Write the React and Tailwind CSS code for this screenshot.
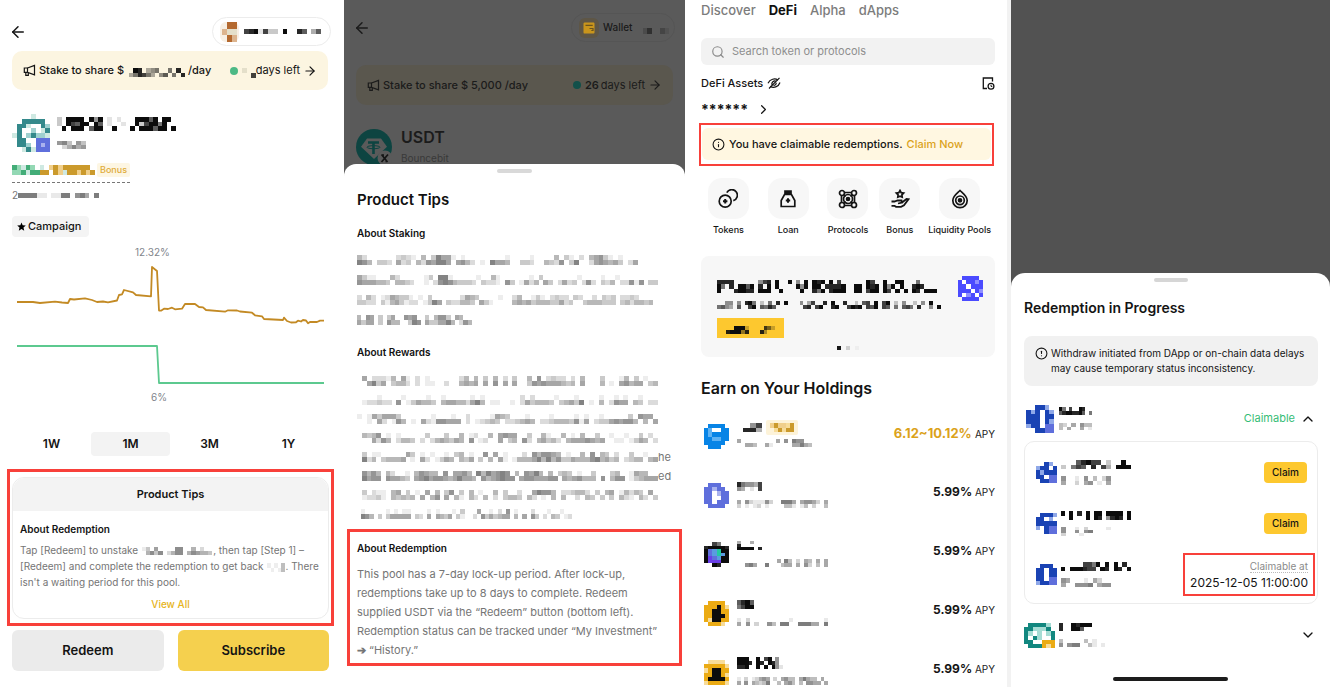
import React, { useState } from 'react';
import {
  LuArrowLeft,
  LuArrowRight,
  LuChevronDown,
  LuChevronRight,
  LuChevronUp,
  LuInfo,
  LuCircleAlert,
  LuSearch,
} from 'react-icons/lu';

// Colours a mosaic cell can take, digits are shades of black
const cellColors = {
  T: '#34898b',
  m: '#9fd0cf',
  l: '#cfe9e2',
  B: '#5f6fdc',
  p: '#a9b2ee',
  G: '#43ad78',
  g: '#93d8b4',
  O: '#cb9a2c',
  o: '#f0cf8c',
  R: '#b4692f',
  r: '#dcb48e',
  b: '#e4dfca',
  w: '#ffffff',
  V: '#4b4bff',
  v: '#8f8fff',
  S: '#0784e6',
  s: '#5fb2f3',
  N: '#1a43b4',
  n: '#8fa8e8',
  Y: '#ebab14',
  y: '#f7dc9a',
  C: '#12877f',
  c: '#a5dcd4',
  E: '#22c9a2',
  e: '#5a9be0',
  U: '#6a3fe8',
};

function Mosaic({ rows, className }) {
  const cols = Math.max(...rows.map((row) => row.length));
  return (
    <svg
      aria-hidden="true"
      className={className}
      viewBox={`0 0 ${cols} ${rows.length}`}
      preserveAspectRatio="none"
      shapeRendering="crispEdges"
    >
      {rows.map((row, y) =>
        row.split('').map((cell, x) => {
          if (cell === ' ') return null;
          const shade = Number(cell);
          return (
            <rect
              key={`${x}-${y}`}
              x={x}
              y={y}
              width="1"
              height="1"
              fill={shade ? '#0c0c0c' : cellColors[cell]}
              fillOpacity={shade ? shade / 9 : 1}
            />
          );
        })
      )}
    </svg>
  );
}

function Megaphone() {
  return (
    <svg
      viewBox="0 0 13 13"
      className="h-[13px] w-[13px] shrink-0"
      fill="none"
      stroke="currentColor"
      strokeWidth="1.2"
    >
      <path d="M4.5 4 11.5 1.4v9.4L4.5 8.400Z" />
      <path d="M4.500 4H1.300v4.400h3.200M2.800 8.400v3h2.500V9" />
    </svg>
  );
}

function RedBox({ className, children }) {
  return <div className={`border-[#f8403a] ${className}`}>{children}</div>;
}

const stakingLines = [
  [
    '42      2321 4 37551 1        1    1    4 31 2 45631 1  ',
    '764 332 523 4265775 5642 1 7554  332  4326 37  2565453 25',
  ],
  [
    '5311   42     13 771     1  41      1 3       1    1  1     ',
    '6555443 4432  1 267643332 3221 63 1524 53 2523 262 324 22616 33',
  ],
  [
    '2 42 1254331 1 3      2543    1  24  131 2322 32  2 323 2232 ',
    '3322 31453122 1375 322443 531    4545344433523  3444333 3424434 ',
  ],
  ['4 65 3 35  656  3 4663 54 ', '5355 3 644  376 5335574 264'],
];

const rewardLines = [
  [
    ' 5 22214 51 2 1      24 4 3 4 2 3  4 6 2322 2 4   3   14 3 1 ',
    '  5735 3442 2 11  2  4545 5 6 5 5  3656555434 5   4 1 56455 34',
  ],
  [
    '    1    1    1  1     1 1       2 2    1   1    1  1 1  1   ',
    ' 122322 6 135443 455442574 11  1 2534443 34537 1 4 2655 43 22',
  ],
  [
    '1 1535553      1   1  2    1543   1    1    1 1  1     3 655',
    '  1 52 164 1 52166555 2 12343 223454 2234443615 233565664 4 5',
  ],
  [
    ' 4346 1 1     3   3  4 12  4 5655  3  41  4 1 4  3  1  1  3 2',
    '   5264 2443 2 2454354 6 12  5 34 62 45342 45556545  11 1354 2',
  ],
  [
    ' 3 11     53 1 1  1 34 1  6 5 1   2 646654 1  4 6 43 2  3  1 ',
    ' 724 34445 1 52 1354 435 3 4 51 1444574746335444674534 2344 45',
  ],
  [
    ' 6464 42  1 46544 6 5564 7475676 4 6574 4 343 1  3   34  1544 ',
    ' 7566 65543 5675665457554 6456766 56655566 5456444 6 466 134555',
  ],
  [
    ' 3 211 45 3 1 5 4 36 3 4 1  4 3  2  57664 223442 3 45 14243 5 ',
    ' 12231 43434 5 46 5 41 42 4 2 3443 42 1 4 4  2 43 3 3 421 42 3',
  ],
  [
    ' 1     1 1 11    1 1   1 3   5  1 2 6 1   2   1  1  ',
    ' 764 3 355555 32 5 5435 31  2 6353455 4 5 63 2 43 12',
  ],
];

function StakePanel() {
  const [range, setRange] = useState('1M');

  return (
    <section className="min-w-0 bg-white pt-[17px]">
      <div className="pr-4 pl-3">
        <header className="flex h-[29px] items-center justify-between">
          <button type="button" aria-label="Back">
            <LuArrowLeft className="-ml-[3px] h-[18px] w-[18px]" />
          </button>
          <div className="-mr-[3px] flex h-[29px] w-[119px] items-center gap-[5px] rounded-full border border-[#ececec] pl-[7px]">
            <span className="rounded-md bg-[#f7efe4] px-[2px]">
              <Mosaic
                className="h-5 w-[15px]"
                rows={[' RR', 'rbb', ' Rr']}
              />
            </span>
            <Mosaic className="h-[5px] w-[77px]" rows={['7891722 9  86 36']} />
          </div>
        </header>

        <a
          href="#campaign"
          className="mt-[5px] flex h-[39px] items-center rounded-[10px] bg-[#fcf5e1] px-[11px] text-[11px] font-medium"
        >
          <Megaphone />
          <span className="ml-[3px] whitespace-nowrap">Stake to share $</span>
          <Mosaic
            className="mt-1 ml-[5px] h-[9px] w-[56px]"
            rows={[' 98 345  5 8', '358753 46 5 8']}
          />
          <span className="ml-[3px]">/day</span>
          <span className="mr-1 ml-auto h-2 w-2 rounded-full bg-[#4cb985]" />
          <Mosaic className="mt-1 h-[10px] w-[14px]" rows={['b  ', '  7']} />
          <span className="font-normal whitespace-nowrap">days left</span>
          <LuArrowRight className="ml-[3px] h-[14px] w-[14px] shrink-0" />
        </a>

        <div className="mt-6 flex h-[38px]">
          <Mosaic
            className="h-[38px] w-[38px]"
            rows={[
              '    l   ',
              '  TTTTT ',
              ' TTlwwTm',
              ' TwwmwlT',
              'lTwmTmml',
              ' TTwwBBB',
              ' TTmwBpB',
              '  lTlBBB',
            ]}
          />
          <div className="ml-[7px] pt-[3px]">
            <Mosaic
              className="h-[14px] w-[119px]"
              rows={[
                '2 9999 949 1 1   99969 99',
                '2 97699 96 1  1  9279959 ',
                ' 9 999 699  9   9 999699 9',
              ]}
            />
            <Mosaic
              className="mt-[10px] h-2 w-[29px] opacity-75"
              rows={['563 53', ' 24645']}
            />
          </div>
        </div>

        <div className="mt-[11px] flex h-5 w-[118px] items-start border-b border-dashed border-[#777]">
          <Mosaic
            className="mt-[2px] h-[10px] w-[84px]"
            rows={['GglGg l oOoOOOOOO ', 'ggGlGGOO OolOOoOoO']}
          />
          <span className="ml-[2px] rounded-xs bg-[#fdf6e3] px-[3px] text-[9px] leading-[14px] font-medium text-[#e0ac3a]">
            Bonus
          </span>
        </div>
        <div className="mt-1 flex h-4 items-center text-[10px] text-[#777]">
          2
          <Mosaic
            className="h-[5px] w-[81px] opacity-80"
            rows={['666611 1166 564 6']}
          />
        </div>

        <span className="mt-[13px] flex h-[21px] w-[77px] items-center rounded-sm bg-[#f4f4f4] px-[5px] text-[11px] font-medium">
          <svg viewBox="0 0 10 10" className="mr-[2px] h-[9px] w-[9px]">
            <path d="M5 .5 6.300 3.700 9.800 4 7.200 6.200 8 9.600 5 7.800 2 9.600 2.800 6.200.2 4l3.500-.3Z" />
          </svg>
          Campaign
        </span>

        <div className="mt-[7px] mr-1 ml-[5px] text-[10px] leading-4 text-[#81858c]">
          <p className="pl-[118px] whitespace-nowrap">12.32%</p>
          <svg
            viewBox="0 0 307 124"
            className="mt-1 w-full"
            fill="none"
            strokeLinejoin="round"
            strokeWidth="1.800"
          >
            <polyline
              stroke="#c38a24"
              points="0,38 16,38 23,39 38,37.700 45,38.500 51,39 53,35 57,35.500 68,34.300 75,36 80,38 86,37.500 91,38.300 100,36.500 102,31 105,30.300 107,26 116,28.300 119,31 134,32.300 135,3 140,7 142,46.500 144,46.700 147,44.700 151,45 155,43.700 158,45.300 165,44.700 168,40 178,40 182,43 186,43.300 189,46 208,47.700 211,46.300 220,46.500 223,47.500 235,48.700 238,51.300 245,52.300 247,55 266,56 267,53.700 270,57 274,58.500 279,58.300 281,56.700 284,57.500 286,56 289,56.500 291,59.300 293,58 300,58 303,56.700 307,56.700"
            />
            <polyline
              stroke="#5cc98f"
              points="0,82 140,82 142,119 307,119"
            />
          </svg>
          <p className="mt-px pl-[134px]">6%</p>
        </div>

        <div className="mt-[27px] grid grid-cols-4 text-[12px] font-semibold">
          {['1W', '1M', '3M', '1Y'].map((item) => (
            <button
              key={item}
              type="button"
              onClick={() => setRange(item)}
              className={
                range === item ? 'h-6 rounded-sm bg-[#f3f3f3]' : 'h-6'
              }
            >
              {item}
            </button>
          ))}
        </div>
      </div>

      <RedBox className="mt-[13px] mr-[10px] ml-[7px] border-3 px-[2px] pt-[5px] pb-1">
        <div className="rounded-xl border border-[#ececec]">
          <h2 className="rounded-t-xl bg-[#f3f3f3] text-center text-[11px] leading-[33px] font-semibold">
            Product Tips
          </h2>
          <div className="px-[7px] pt-[11px] pb-[6px]">
            <h3 className="text-[10px] leading-[14px] font-semibold">
              About Redemption
            </h3>
            <p className="mt-[6px] text-[10px] leading-4 whitespace-nowrap text-[#757575]">
              Tap [Redeem] to unstake
              <Mosaic
                className="mr-px ml-1 inline h-2 w-[70px] opacity-70"
                rows={['13 5    66  4 2 ', ' 4636 2466 465443']}
              />
              , then tap [Step 1] –
              <br />
              [Redeem] and complete the redemption to get back
              <Mosaic
                className="ml-1 inline h-[9px] w-[18px] opacity-60"
                rows={['1 1 4', ' 1 14']}
              />
              . There
              <br />
              isn't a waiting period for this pool.
            </p>
            <button
              type="button"
              className="mx-auto mt-[6px] block text-[10px] leading-4 font-medium text-[#e6b422]"
            >
              View All
            </button>
          </div>
        </div>
      </RedBox>

      <div className="mt-1 grid grid-cols-2 gap-[14px] pr-[15px] pl-3 text-[13px] font-semibold">
        <button type="button" className="h-[41px] rounded-md bg-[#ebebeb]">
          Redeem
        </button>
        <button type="button" className="h-[41px] rounded-md bg-[#f5d04e]">
          Subscribe
        </button>
      </div>
    </section>
  );
}

function TipsPanel() {
  return (
    <section className="flex min-w-0 flex-col bg-[#5a5a5a] text-[#111]">
      <div className="h-[164px] overflow-hidden px-3 pt-[13px] text-[#1b1b1b]">
        <header className="flex h-[29px] items-center justify-between">
          <button type="button" aria-label="Back">
            <LuArrowLeft className="-ml-[3px] h-[18px] w-[18px]" />
          </button>
          <div className="-mr-[2px] flex h-[29px] w-[104px] items-center rounded-full border border-[#555] pl-[7px] text-[10px] font-medium">
            <span className="flex h-5 w-5 items-center justify-center rounded-md bg-[#5e5646]">
              <svg viewBox="0 0 12 12" className="h-3 w-3">
                <path
                  fill="#c9951c"
                  d="M.5 1.500A1.200 1.200 0 0 1 1.700.4h8.600c.7 0 1.200.5 1.200 1.200v8.800c0 .7-.5 1.200-1.200 1.200H1.700A1.200 1.200 0 0 1 .5 10.400Z"
                />
                <path
                  d="M2.500 3.300h7.200M6.500 6.500h3.500v2H8.300"
                  stroke="#6b541c"
                  strokeWidth="1.200"
                  fill="none"
                />
              </svg>
            </span>
            <span className="ml-1">Wallet</span>
            <Mosaic
              className="mt-[6px] ml-[10px] h-[6px] w-[26px] opacity-80"
              rows={['26  31']}
            />
          </div>
        </header>

        <a
          href="#campaign"
          className="mt-[23px] flex h-10 items-center rounded-[10px] bg-[#5a574e] px-[11px] text-[11px] font-medium"
        >
          <Megaphone />
          <span className="ml-[3px] whitespace-nowrap">
            Stake to share $ 5,000 /day
          </span>
          <span className="mr-1 ml-auto h-2 w-2 rounded-full bg-[#12504a]" />
          <span className="font-semibold">26</span>
          <span className="ml-[2px] font-normal whitespace-nowrap">
            days left
          </span>
          <LuArrowRight className="ml-[3px] h-[14px] w-[14px] shrink-0" />
        </a>

        <div className="mt-6 flex">
          <svg viewBox="0 0 36 36" className="h-9 w-9 shrink-0">
            <circle cx="18" cy="18" r="18" fill="#0d4441" />
            <path d="M11 9.500h14l6 8.200L18 30 5 17.700Z" fill="#5a5a5a" />
            <path
              d="M12 13.500h11M17.500 13.500V25"
              stroke="#0d4441"
              strokeWidth="2.600"
            />
            <ellipse
              cx="17.500"
              cy="18.200"
              rx="6.500"
              ry="1.500"
              fill="none"
              stroke="#0d4441"
            />
            <circle cx="29" cy="29" r="7.500" fill="#5a5a5a" />
            <path
              d="m25.500 25.500 6 7.500M32 25.500l-6.500 7.500M26 26h2M29.500 32.500h2"
              stroke="#151515"
              strokeWidth="1.700"
            />
          </svg>
          <div className="ml-[9px]">
            <h1 className="text-[16px] leading-4 font-semibold">USDT</h1>
            <p className="mt-[6px] text-[10px] leading-[14px] text-[#393939]">
              Bouncebit
            </p>
          </div>
        </div>
      </div>

      <div className="flex-1 rounded-t-xl bg-white pt-[5px]">
        <div className="mx-auto h-1 w-[35px] rounded-full bg-[#d9d9d9]" />
        <div className="px-[13px]">
          <h2 className="mt-[17px] text-[15px] leading-5 font-semibold">
            Product Tips
          </h2>
          <h3 className="mt-4 text-[10px] leading-[14px] font-semibold">
            About Staking
          </h3>
          <div className="mt-[15px] flex flex-col gap-[10px] opacity-65">
            {stakingLines.map((rows, i) => (
              <Mosaic
                key={i}
                rows={rows}
                className={
                  i === 0
                    ? 'h-[10px] w-[281px]'
                    : i === 3
                      ? 'h-[10px] w-[115px]'
                      : 'h-[10px] w-[301px]'
                }
              />
            ))}
          </div>
          <h3 className="mt-5 text-[10px] leading-[14px] font-semibold">
            About Rewards
          </h3>
          <div className="mt-[17px] flex flex-col gap-[9px] text-[11px] leading-[10px] text-[#757575]">
            {rewardLines.map((rows, i) => (
              <div key={i} className="flex h-[10px]">
                <Mosaic
                  rows={rows}
                  className={
                    i === 7
                      ? 'h-[10px] w-[215px] opacity-65'
                      : 'h-[10px] w-[301px] opacity-65'
                  }
                />
                {i === 4 && <span>he</span>}
                {i === 5 && <span>ed</span>}
              </div>
            ))}
          </div>
        </div>

        <RedBox className="mx-[3px] mt-[10px] border-3 px-[7px] pt-[9px] pb-[3px]">
          <h3 className="text-[10px] leading-[14px] font-semibold">
            About Redemption
          </h3>
          <p className="mt-[10px] text-[11px] leading-[19px] whitespace-nowrap text-[#757575]">
            This pool has a 7-day lock-up period. After lock-up,
            <br />
            redemptions take up to 8 days to complete. Redeem
            <br />
            supplied USDT via the “Redeem” button (bottom left).
            <br />
            Redemption status can be tracked under “My Investment”
            <br />
            <span className="font-bold">➔</span> “History.”
          </p>
        </RedBox>
      </div>
    </section>
  );
}

const shortcuts = [
  {
    name: 'Tokens',
    icon: (
      <>
        <circle cx="7.200" cy="12.200" r="6" />
        <path d="M8.800 3.600A5.600 5.600 0 1 1 15.300 11.600" />
        <path d="M7.200 10v4.400M5 12.200h4.400" strokeWidth="2" />
      </>
    ),
  },
  {
    name: 'Loan',
    icon: (
      <>
        <path d="M6.500 5.500h7l3.300 6v6H3.200v-6Z" />
        <path d="M7 2h6v2.500H7Z" fill="currentColor" />
        <path d="M10 9.300v4.400M7.800 11.500h4.400" strokeWidth="2" />
      </>
    ),
  },
  {
    name: 'Protocols',
    icon: (
      <>
        <circle cx="4" cy="4" r="2.500" />
        <circle cx="16" cy="4" r="2.500" />
        <circle cx="4" cy="16" r="2.500" />
        <circle cx="16" cy="16" r="2.500" />
        <circle cx="10" cy="10" r="4.500" />
        <circle cx="10" cy="10" r="1.500" fill="currentColor" />
        <path d="M6.500 3.500h7M6.500 16.500h7M3.500 6.500v7M16.500 6.500v7M5.500 5.500l2 2M14.500 5.500l-2 2M5.500 14.500l2-2M14.500 14.500l-2-2" />
      </>
    ),
  },
  {
    name: 'Bonus',
    icon: (
      <>
        <path d="m10 1.500 1.200 2.200 2.400.4-1.700 1.700.3 2.400L10 7.200 7.800 8.200l.3-2.400-1.700-1.700 2.400-.4Z" />
        <path
          d="M1.500 12.500h3l3-1h4l.5 2-4 1M12 13.500l4.500-3.500 2 .3-4.500 6-3 1.500H6l-1.500-1h-3"
          strokeWidth="1.800"
        />
      </>
    ),
  },
  {
    name: 'Liquidity Pools',
    icon: (
      <>
        <path d="M10 1.500C7 4.500 2.800 7 2.800 11.500a7.200 7.200 0 0 0 14.400 0C17.200 7 13 4.500 10 1.500Z" />
        <circle cx="10" cy="11.300" r="4.300" />
        <circle cx="10" cy="11.300" r="1.500" fill="currentColor" />
      </>
    ),
  },
];

const holdings = [
  {
    logo: [' SSSS ', 'SswwSS', 'SsSSSS', 'SSssSS', 'SSSSS ', ' SSS  '],
    rate: '6.12~10.12%',
    hot: true,
    name: ['  47', ' 883'],
    detail: ['4         4 5 655 ', '  443  41     44643'],
  },
  {
    logo: [' BBB  ', 'BBpBB ', 'BBwpBB', 'BBwwBB', 'BBwBBB', ' BBBB '],
    rate: '5.99%',
    name: ['854437', '43 1 7'],
    detail: ['4 5211152  6664 45542 4', '2 1 12 1    331 13 2  3'],
  },
  {
    logo: ['  75  ', '899998', '9BeE99', '9BeEe9', '9UBe99', '9UUU99', '  98  '],
    rate: '5.99%',
    name: ['3  3  ', '8     ', '9999 8'],
    detail: ['          4 63 2 43 4 4', '  564  6   344 4 52 3 4'],
  },
  {
    logo: [' YYYY ', 'YYY9Yy', 'YY99YY', 'YY999Y', 'Yy99YY', ' YYYy '],
    rate: '5.99%',
    name: ['6896  ', '5799  '],
    detail: ['1 2         1       1', '4 5 2  53 66  66644 6'],
  },
  {
    logo: [' yyyy ', 'YYYYYy', 'yY99YY', 'YY99Yy', 'Y9999Y', 'yYYYYy'],
    rate: '5.99%',
    name: ['999  9 79 4', '9998 98 984', '889  9 9 941'],
    detail: ['1 2 12454 2 4533 46433 4', '4 5 43236  3 453 3 5544 4'],
  },
];

function DefiPanel() {
  return (
    <section className="min-w-0 border-r-4 border-[#f2f2f2] bg-white pr-3 pl-4">
      <nav className="flex h-[21px] items-center gap-[13px] text-[13px] font-medium text-[#7c7c7c]">
        <a href="#discover">Discover</a>
        <a href="#defi" className="font-bold text-[#111]">
          DeFi
        </a>
        <a href="#alpha">Alpha</a>
        <a href="#dapps">dApps</a>
      </nav>

      <label className="mt-[17px] flex h-[27px] items-center rounded-md bg-[#f2f2f2] pl-[10px]">
        <LuSearch className="h-[14px] w-[14px] shrink-0 text-[#8a8a8a]" />
        <input
          type="search"
          aria-label="Search token or protocols"
          placeholder="Search token or protocols"
          className="ml-[7px] min-w-0 flex-1 text-[11px] outline-none placeholder:text-[#8e8e8e]"
        />
      </label>

      <div className="mt-[10px] flex h-4 items-center justify-between text-[11px] font-medium">
        <span className="flex items-center gap-1">
          DeFi Assets
          <svg
            viewBox="0 0 14 12"
            className="h-3 w-[14px]"
            fill="none"
            stroke="currentColor"
            strokeWidth="1.200"
          >
            <path d="M1 6.200C3 2 8 .8 11 3.200M13 5.500C11.500 10 6.500 11.500 3.200 9.200" />
            <path d="M5 8.200C4 5.500 7 3.200 9 4.200M2 11.500 12.500.800M6.500 8.500c1.800 0 2.800-1.200 2.700-2.800" />
          </svg>
        </span>
        <button type="button" aria-label="History">
          <svg
            viewBox="0 0 13 13"
            className="h-[13px] w-[13px]"
            fill="none"
            stroke="currentColor"
            strokeWidth="1.300"
          >
            <path d="M5 11.500H1.300V1h9.200v3.500" />
            <circle cx="9" cy="9.200" r="2.900" />
            <path d="M9 7.700v1.700h1.300" strokeWidth="1" />
          </svg>
        </button>
      </div>

      <div className="mt-[9px] flex h-[18px] items-center text-[14px] font-bold">
        <span>******</span>
        <LuChevronRight className="ml-2 h-[15px] w-[15px]" />
      </div>

      <RedBox className="mt-[5px] mr-px -ml-[2px] border-2 pt-[3px] pr-px pb-1 pl-px">
        <div className="flex h-8 items-center rounded-md bg-[#fff7e1] pl-[10px] text-[11px] font-medium whitespace-nowrap">
          <LuInfo className="mr-1 h-[13px] w-[13px] shrink-0" />
          You have claimable redemptions.
          <a href="#claim" className="ml-1 text-[#dba21b]">
            Claim Now
          </a>
        </div>
      </RedBox>

      <div className="mt-3 grid grid-cols-[55fr_65fr_55fr_49fr_71fr] text-[9px] font-medium">
        {shortcuts.map((item) => (
          <button
            key={item.name}
            type="button"
            className="flex min-w-0 flex-col items-center"
          >
            <span className="flex h-[41px] w-[41px] items-center justify-center rounded-[14px] bg-[#f7f7f7]">
              <svg
                viewBox="0 0 20 20"
                className="h-5 w-5"
                fill="none"
                stroke="currentColor"
                strokeWidth="1.700"
              >
                {item.icon}
              </svg>
            </span>
            <span className="mt-1 leading-[14px] whitespace-nowrap">
              {item.name}
            </span>
          </button>
        ))}
      </div>

      <div className="mt-[19px] rounded-lg bg-[#f7f7f7] pt-5 pr-3 pb-[7px] pl-4">
        <div className="flex items-start justify-between">
          <div className="pt-1">
            <Mosaic
              className="h-[13px] w-[224px]"
              rows={[
                '8888      478 9  9 4 9 989 9 7      97  9  99   5     ',
                '95 8 9969 8 9 9    949 99 88889  99 989 949 9  898    ',
                '9   89988 999  9    9  859 8999  99 799 97 9 9 98 999',
              ]}
            />
            <Mosaic
              className="mt-2 h-2 w-[224px]"
              rows={[
                '  44 4 895 2 5 8 9   4 37  8 9  8  2 67 9 79 2 4  2 4 9',
                '5643 6  79 6586       78 79  89  7989 769 76 5 675 8  4 9',
              ]}
            />
          </div>
          <Mosaic
            className="h-[25px] w-[25px]"
            rows={[' VVVV ', 'VwVVvV', 'VVwVVV', 'VVVwVv', 'VwvVwV', ' VVVV ']}
          />
        </div>
        <button
          type="button"
          aria-label="Earn now"
          className="mt-[9px] flex h-5 w-[67px] items-center bg-[#fdc82f] pl-[9px]"
        >
          <Mosaic
            className="mt-1 h-2 w-[49px]"
            rows={['  9992    752', '899948   83  ']}
          />
        </button>
        <div className="mt-2 ml-[120px] flex gap-[5px]">
          <span className="h-1 w-1 bg-[#161616]" />
          <span className="h-1 w-1 bg-[#cfcfcf]" />
          <span className="h-1 w-1 bg-[#eeeeee]" />
        </div>
      </div>

      <h2 className="mt-[21px] text-[16px] leading-5 font-semibold">
        Earn on Your Holdings
      </h2>

      <ul className="mt-[9px]">
        {holdings.map((item, i) => (
          <li
            key={i}
            className={
              i === holdings.length - 1
                ? 'flex h-[45px] items-start pt-[13px]'
                : 'flex h-[59px] items-start pt-[13px]'
            }
          >
            <Mosaic
              rows={item.logo}
              className="mt-1 ml-[3px] h-[25px] w-[25px]"
            />
            <div className="ml-2">
              <div className="flex h-[14px] items-center">
                <Mosaic
                  rows={item.name}
                  className={
                    item.name[0].length > 6
                      ? 'h-3 w-[46px]'
                      : 'h-[9px] w-[25px]'
                  }
                />
                {item.hot && (
                  <span className="ml-1 rounded-xs bg-[#fdf3d9] px-1 py-[3px]">
                    <Mosaic
                      className="h-[9px] w-6"
                      rows={['oOooyO', ' yOyOO']}
                    />
                  </span>
                )}
              </div>
              <Mosaic
                rows={item.detail}
                className={
                  item.hot
                    ? 'mt-[5px] h-2 w-[75px] opacity-80'
                    : 'mt-[7px] h-2 w-[91px] opacity-80'
                }
              />
            </div>
            <p
              className={
                item.hot
                  ? 'mt-[3px] ml-auto text-[13px] leading-5 font-bold text-[#dba21b]'
                  : 'mt-[3px] ml-auto text-[12px] leading-5 font-bold'
              }
            >
              {item.rate}{' '}
              <span className="text-[10px] font-normal text-[#222]">APY</span>
            </p>
          </li>
        ))}
      </ul>
    </section>
  );
}

const positions = [
  {
    logo: ['  Nn ', 'nNNwN', 'NnNNN', 'NNwBB', ' NNBB'],
    name: ['   68977 2  9 ', '2 576 8 73 999'],
    detail: ['5  1 5 3 25', '4  2 45 1 4'],
  },
  {
    logo: [' NNNn', 'NNwnw', 'NNNNN', 'n NBB', '  NBB'],
    name: ['9 9 8 9 99 9999 9', '  9   9 98 4898 9'],
    detail: ['5  1 2    1', '5  5 56    ', '2   1      '],
  },
  {
    logo: [' NNN ', 'NNwNN', 'NNwNN', 'NNwBB', 'nNNBB'],
    name: ['     7759 9 9 8', '9 999877 98 98 9'],
    detail: ['54   1 42  ', '4  5556 455'],
    unlock: '2025-12-05 11:00:00',
  },
];

function RedemptionPanel() {
  return (
    <section className="flex min-w-0 flex-col bg-[#525252] pt-[273px]">
      <div className="flex flex-1 flex-col rounded-t-[14px] bg-white px-3 pt-[5px] pb-[7px]">
        <div className="mx-auto h-1 w-[34px] rounded-full bg-[#d6d6d6]" />
        <h2 className="mt-4 ml-px text-[14px] leading-5 font-semibold">
          Redemption in Progress
        </h2>

        <div className="mt-[18px] ml-px flex rounded-lg bg-[#f1f1f1] px-[11px] py-[10px] text-[10px] leading-[15px]">
          <LuCircleAlert className="mt-px mr-[3px] h-[13px] w-[13px] shrink-0" />
          <p className="whitespace-nowrap">
            Withdraw initiated from DApp or on-chain data delays
            <br />
            may cause temporary status inconsistency.
          </p>
        </div>

        <div className="mt-[18px] flex h-[29px] items-center pl-[3px]">
          <Mosaic
            className="h-7 w-7"
            rows={[
              '  NNn ',
              'NnNwNn',
              'NNNwNN',
              'NNNwNn',
              'nNNwBB',
              '  NNBB',
            ]}
          />
          <div className="ml-[5px]">
            <Mosaic
              className="h-2 w-[33px]"
              rows={['95 7  98 ', '68998896 5']}
            />
            <Mosaic
              className="mt-2 h-[7px] w-[33px] opacity-80"
              rows={['32 4 533', '3 4  4 1']}
            />
          </div>
          <button
            type="button"
            className="mr-[2px] ml-auto flex items-center gap-[5px] text-[11px] text-[#35bd76]"
          >
            Claimable
            <LuChevronUp className="h-4 w-4 text-[#111]" />
          </button>
        </div>

        <ul className="mt-2 ml-px rounded-[10px] border border-[#ececec] pt-[5px] pb-[3px]">
          {positions.map((item, i) => (
            <li
              key={i}
              className="flex h-[51px] items-center pr-[2px] pl-[11px]"
            >
              <Mosaic rows={item.logo} className="h-[21px] w-[21px]" />
              <div className="ml-1">
                <Mosaic rows={item.name} className="h-[9px] w-[70px]" />
                <Mosaic
                  rows={item.detail}
                  className="mt-[7px] h-[9px] w-[50px] opacity-80"
                />
              </div>
              {item.unlock ? (
                <RedBox className="ml-auto border-2 py-[3px] pr-[5px] pl-[5px] text-right whitespace-nowrap">
                  <p className="text-[10px] leading-4 text-[#8a8a8a]">
                    <span className="border-b border-dotted border-[#bbb]">
                      Claimable at
                    </span>
                  </p>
                  <p className="text-[12px] leading-[17px]">{item.unlock}</p>
                </RedBox>
              ) : (
                <button
                  type="button"
                  className="mr-2 ml-auto h-[21px] w-[43px] rounded-sm bg-[#fdc82f] text-[10px] font-medium"
                >
                  Claim
                </button>
              )}
            </li>
          ))}
        </ul>

        <div className="mt-[18px] flex h-[26px] items-center pl-px">
          <Mosaic
            className="h-[25px] w-[31px]"
            rows={[
              ' CCCCc ',
              'CCcccC ',
              'CcwcwcC',
              'CwCcwwC',
              'CCwwYYY',
              ' CCCYyY',
            ]}
          />
          <div className="ml-1">
            <Mosaic
              className="h-2 w-[33px]"
              rows={['8  98999', '8  996  ']}
            />
            <Mosaic
              className="mt-2 h-2 w-[46px] opacity-80"
              rows={['3     3 1  ', '5 566  31 1']}
            />
          </div>
          <button
            type="button"
            aria-label="Expand"
            className="mr-[2px] ml-auto"
          >
            <LuChevronDown className="h-4 w-4" />
          </button>
        </div>

        <div className="mx-auto mt-auto h-1 w-[115px] rounded-full bg-[#1c1c1c]" />
      </div>
    </section>
  );
}

function App() {
  return (
    <main className="grid min-h-screen grid-cols-[344fr_341fr_326fr_319fr] font-[Inter,sans-serif] text-[#141414]">
      <StakePanel />
      <TipsPanel />
      <DefiPanel />
      <RedemptionPanel />
    </main>
  );
}

export default App;
